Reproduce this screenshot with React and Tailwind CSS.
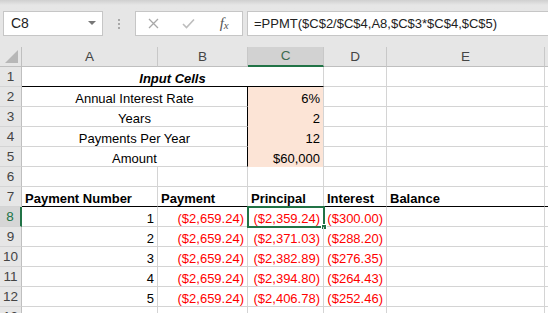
import React from "react";

const RED = "text-[#ff0000]";

function RowHead({ n, active }) {
  return (
    <div
      className={
        "flex items-center justify-center text-[13.5px] pt-[1px] border-b border-[#d4d4d4] " +
        (active
          ? "bg-[#d6d6d6] text-[#217346] border-r-2 border-r-[#217346]"
          : "bg-[#e6e6e6] text-[#444] border-r border-r-[#bfbfbf]")
      }
    >
      {n}
    </div>
  );
}

function Cell({ children, className = "" }) {
  return (
    <div
      className={
        "border-r border-b border-[#d4d4d4] px-[3px] leading-[23px] text-[13px] whitespace-nowrap overflow-visible " +
        className
      }
    >
      {children}
    </div>
  );
}

const data = [
  [1, "($2,659.24)", "($2,359.24)", "($300.00)"],
  [2, "($2,659.24)", "($2,371.03)", "($288.20)"],
  [3, "($2,659.24)", "($2,382.89)", "($276.35)"],
  [4, "($2,659.24)", "($2,394.80)", "($264.43)"],
  [5, "($2,659.24)", "($2,406.78)", "($252.46)"],
  [6, "($2,659.24)", "($2,418.81)", "($240.43)"],
];

const inputs = [
  ["Annual Interest Rate", "6%"],
  ["Years", "2"],
  ["Payments Per Year", "12"],
  ["Amount", "$60,000"],
];

export default function App() {
  return (
    <div className="w-[548px] h-[313px] overflow-hidden bg-white font-['Liberation_Sans',Arial,sans-serif] text-black">
      {/* Toolbar */}
      <div className="h-[47px] bg-gradient-to-b from-[#cfcfcf] via-[#e6e6e6] to-[#e6e6e6] [background-size:100%_10px] bg-no-repeat bg-[#e6e6e6] flex items-start pt-[11px]">
        <div className="ml-[3px] w-[100px] h-[25px] bg-white border border-[#c6c6c6] flex items-center justify-between pl-[7px] pr-[6px]">
          <span className="text-[14px] text-[#222]">C8</span>
          <svg width="8" height="5" viewBox="0 0 8 5">
            <polygon points="0,0 8,0 4,4" fill="#777" />
          </svg>
        </div>
        <div className="w-[32px] h-[25px] flex flex-col items-center justify-center gap-[2px]">
          <span className="w-[2px] h-[2px] bg-[#a8a8a8]" />
          <span className="w-[2px] h-[2px] bg-[#a8a8a8]" />
          <span className="w-[2px] h-[2px] bg-[#a8a8a8]" />
        </div>
        <div className="w-[108px] h-[25px] bg-white border border-[#c6c6c6] flex items-center">
          <div className="w-[34px] flex justify-center ml-[1px]">
            <svg width="11" height="11" viewBox="0 0 11 11">
              <path d="M1 1 L10 10 M10 1 L1 10" stroke="#a8a8a8" strokeWidth="1.3" />
            </svg>
          </div>
          <div className="w-[36px] flex justify-center">
            <svg width="13" height="11" viewBox="0 0 13 11">
              <path d="M1 6 L4.5 9.5 L12 1.5" stroke="#bdbdbd" strokeWidth="1.6" fill="none" />
            </svg>
          </div>
          <div className="w-[36px] flex justify-center font-['Liberation_Serif',serif] italic text-[#555]">
            <span className="text-[15px] leading-none">f</span>
            <span className="text-[11px] leading-none mt-[4px]">x</span>
          </div>
        </div>
        <div className="ml-[4px] flex-1 -mr-[4px] h-[25px] bg-white border border-[#c6c6c6] flex items-center pl-[6px] pt-[1px]">
          <span className="text-[13px] text-[#222] whitespace-nowrap">
            =PPMT($C$2/$C$4,A8,$C$3*$C$4,$C$5)
          </span>
        </div>
      </div>

      {/* Grid */}
      <div className="grid grid-cols-[22px_136px_90px_76px_63px_158px_1fr] auto-rows-[20px]">
        {/* Column headers */}
        <div className="bg-[#e6e6e6] border-r border-b border-[#bfbfbf] flex items-end justify-end pr-[3px] pb-[3px]">
          <svg width="13" height="13" viewBox="0 0 13 13">
            <polygon points="13,0 13,13 0,13" fill="#b7b7b7" />
          </svg>
        </div>
        {["A", "B", "C", "D", "E", ""].map((c) => (
          <div
            key={c || "F"}
            className={
              "flex items-center justify-center text-[13.5px] pt-[1px] border-r border-[#c8c8c8] " +
              (c === "C"
                ? "bg-[#d2d2d2] text-[#3d6b50] border-b-2 border-b-[#217346]"
                : "bg-[#e6e6e6] text-[#444] border-b border-b-[#bfbfbf]")
            }
          >
            {c}
          </div>
        ))}

        {/* Row 1 */}
        <RowHead n={1} />
        <Cell className="col-span-3 text-center font-bold italic border-b-black">
          Input Cells
        </Cell>
        <Cell />
        <Cell />
        <Cell />

        {/* Rows 2-5 */}
        {inputs.map(([label, val], i) => (
          <React.Fragment key={label}>
            <RowHead n={i + 2} />
            <Cell className="col-span-2 text-center text-[13.5px] border-r-black">
              {label}
            </Cell>
            <div className="bg-[#fce4d6] border-r border-[#d4d4d4] text-right pr-[3px] leading-[23px] text-[13px]">
              {val}
            </div>
            <Cell />
            <Cell />
            <Cell />
          </React.Fragment>
        ))}

        {/* Row 6 */}
        <RowHead n={6} />
        <Cell />
        <Cell />
        <Cell />
        <Cell />
        <Cell />
        <Cell />

        {/* Row 7 */}
        <RowHead n={7} />
        {["Payment Number", "Payment", "Principal", "Interest", "Balance", ""].map((h, i) => (
          <Cell key={i} className="font-bold border-b-black">
            {h}
          </Cell>
        ))}

        {/* Rows 8+ */}
        {data.map(([n, p, pr, it], i) => (
          <React.Fragment key={n}>
            <RowHead n={i + 8} active={i === 0} />
            <Cell className="text-right">{n}</Cell>
            <Cell className={"text-right " + RED}>{p}</Cell>
            <Cell className={"text-right relative " + RED}>
              {pr}
              {i === 0 && (
                <div className="absolute -left-[1px] -top-[1px] w-[78px] h-[22px] border-2 border-[#217346]">
                  <div className="absolute -right-[4px] -bottom-[4px] w-[6px] h-[6px] bg-[#217346] border border-white" />
                </div>
              )}
            </Cell>
            <Cell className={"text-right " + RED}>{it}</Cell>
            <Cell />
            <Cell />
          </React.Fragment>
        ))}
      </div>
    </div>
  );
}
